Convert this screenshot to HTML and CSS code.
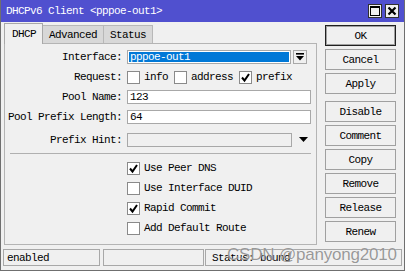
FILE: index.html
```html
<!DOCTYPE html>
<html>
<head>
<meta charset="utf-8">
<link rel="stylesheet" href="styles.css">
</head>
<body>
<div class="window">
  <div class="titlebar">
    <span class="title">DHCPv6 Client &lt;pppoe-out1&gt;</span>
    <div class="tbtns">
      <span class="tbtn"><svg width="12" height="12" viewBox="0 0 12 12"><rect x="1.5" y="1.5" width="9" height="9" fill="none" stroke="#000" stroke-width="1"/><line x1="1" y1="2" x2="11" y2="2" stroke="#000" stroke-width="2"/></svg></span>
      <span class="tbtn"><svg width="12" height="12" viewBox="0 0 12 12"><path d="M2.5 2.5 L9.5 9.5 M9.5 2.5 L2.5 9.5" stroke="#000" stroke-width="2.2" fill="none"/></svg></span>
    </div>
  </div>
  <div class="body">
    <div class="left">
      <div class="tabs">
        <div class="tab active">DHCP</div>
        <div class="tab">Advanced</div>
        <div class="tab">Status</div>
      </div>
      <div class="panel">
        <div class="row">
          <div class="label">Interface:</div>
          <div class="field sel"><span class="hl">pppoe-out1</span></div>
          <div class="ddbtn"><svg width="10" height="10" viewBox="0 0 10 10"><rect x="1" y="1" width="8" height="1.6" fill="#000"/><path d="M1 4 L9 4 L5 8.5 Z" fill="#000"/></svg></div>
        </div>
        <div class="row">
          <div class="label">Request:</div>
          <span class="cb"></span><span class="cbt">info</span>
          <span class="cb"></span><span class="cbt">address</span>
          <span class="cb"><svg width="11" height="11" viewBox="0 0 11 11"><path d="M2 5.5 L4.5 8.5 L9 2" stroke="#000" stroke-width="2" fill="none"/></svg></span><span class="cbt">prefix</span>
        </div>
        <div class="row">
          <div class="label">Pool Name:</div>
          <div class="field full">123</div>
        </div>
        <div class="row">
          <div class="label">Pool Prefix Length:</div>
          <div class="field full">64</div>
        </div>
        <div class="row hint">
          <div class="label">Prefix Hint:</div>
          <div class="field dis"></div>
          <svg class="tri" width="9" height="6" viewBox="0 0 9 6"><path d="M0 0 L9 0 L4.5 5 Z" fill="#000"/></svg>
        </div>
        <div class="sep"></div>
        <div class="checks">
          <div class="crow"><span class="cb"><svg width="11" height="11" viewBox="0 0 11 11"><path d="M2 5.5 L4.5 8.5 L9 2" stroke="#000" stroke-width="2" fill="none"/></svg></span><span class="cbt">Use Peer DNS</span></div>
          <div class="crow"><span class="cb"></span><span class="cbt">Use Interface DUID</span></div>
          <div class="crow"><span class="cb"><svg width="11" height="11" viewBox="0 0 11 11"><path d="M2 5.5 L4.5 8.5 L9 2" stroke="#000" stroke-width="2" fill="none"/></svg></span><span class="cbt">Rapid Commit</span></div>
          <div class="crow"><span class="cb"></span><span class="cbt">Add Default Route</span></div>
        </div>
      </div>
    </div>
    <div class="buttons">
      <div class="btn ok">OK</div>
      <div class="btn">Cancel</div>
      <div class="btn">Apply</div>
      <div class="btn gap">Disable</div>
      <div class="btn">Comment</div>
      <div class="btn">Copy</div>
      <div class="btn">Remove</div>
      <div class="btn">Release</div>
      <div class="btn">Renew</div>
    </div>
  </div>
  <div class="statusbar">
    <div class="cell c1">enabled</div>
    <div class="cell c2"></div>
    <div class="cell c3">Status: bound</div>
  </div>
  <div class="watermark">CSDN @panyong2010</div>
</div>
</body>
</html>
```

FILE: styles.css
```css
* { box-sizing: border-box; }
html, body { margin: 0; padding: 0; background: #f0f0f0; }
body {
  font-family: "Liberation Mono", "Courier New", monospace;
  font-size: 11px;
  letter-spacing: -0.6px;
  color: #000;
}
.window {
  position: relative;
  width: 405px;
  height: 271px;
  background: #f0f0f0;
  border: 1px solid #6f6f6f;
  border-top: none;
  display: flex;
  flex-direction: column;
  overflow: hidden;
}
.titlebar {
  height: 22px;
  margin: 0 -1px;
  background: #5050cf;
  display: flex;
  align-items: center;
  justify-content: space-between;
  padding-left: 6px;
  padding-right: 6px;
  flex: none;
}
.title { color: #fff; font-size: 11px; }
.tbtns { display: flex; gap: 3px; }
.tbtn {
  width: 14px;
  height: 14px;
  background: #f0f0f0;
  border: 1px solid #303030;
  display: flex;
  align-items: center;
  justify-content: center;
}
.body {
  height: 224px;
  display: flex;
  flex: none;
}
.left {
  margin-left: 3px;
  width: 313px;
  display: flex;
  flex-direction: column;
}
.tabs {
  height: 21px;
  display: flex;
  align-items: flex-end;
}
.tab {
  height: 18px;
  padding: 0 6px;
  background: #d8d8d8;
  border: 1px solid #b8b8b8;
  border-bottom: none;
  display: flex;
  align-items: center;
  margin-left: -1px;
}
.tab:first-child { margin-left: 0; }
.tab.active {
  background: #f0f0f0;
  border-color: #a8a8a8;
  padding: 0 6px 0 7px;
  position: relative;
  z-index: 1;
  margin-bottom: -1px;
  height: 21px;
}
.panel {
  height: 202px;
  border: 1px solid #b4b4b4;
  padding-top: 3px;
  display: flex;
  flex-direction: column;
}
.row {
  height: 20px;
  display: flex;
  align-items: center;
}
.row.hint { margin-top: 3px; }
.label {
  width: 117px;
  text-align: right;
  margin-right: 5px;
  white-space: nowrap;
}
.field {
  height: 14px;
  background: #fff;
  border: 1px solid #a8a8a8;
  padding-left: 2px;
  display: flex;
  align-items: center;
}
.field.full { width: 184px; }
.field.sel { width: 164px; padding: 1px; }
.hl {
  background: #0078d7;
  color: #fff;
  height: 100%;
  width: 100%;
  padding-left: 1px;
  display: flex;
  align-items: center;
}
.field.dis { width: 165px; background: #f0f0f0; }
.ddbtn {
  width: 14px;
  height: 14px;
  margin-left: 2px;
  border: 1px solid #a8a8a8;
  background: #f0f0f0;
  display: flex;
  align-items: center;
  justify-content: center;
}
.tri { margin-left: 7px; }
.cb {
  width: 13px;
  height: 13px;
  background: #fff;
  border: 1px solid #8a8a8a;
  display: inline-flex;
  align-items: center;
  justify-content: center;
  flex: none;
}
.cbt { margin-left: 4px; margin-right: 6px; }
.sep {
  margin: 3px 0 0 5px;
  width: 301px;
  height: 1px;
  background: #b0b0b0;
  flex: none;
}
.checks {
  margin-top: 4px;
  padding-left: 122px;
  display: flex;
  flex-direction: column;
}
.crow {
  height: 20px;
  display: flex;
  align-items: center;
}
.buttons {
  margin-left: 8px;
  width: 71px;
  padding-top: 3px;
  display: flex;
  flex-direction: column;
  gap: 3px;
}
.btn {
  height: 21px;
  border: 1px solid #a0a0a0;
  background: #f0f0f0;
  display: flex;
  align-items: center;
  justify-content: center;
}
.btn.ok {
  border: 1px solid #202020;
  box-shadow: inset 0 0 0 1px #a0a0a0;
}
.btn.gap { margin-top: 4px; }
.statusbar {
  flex: 1;
  display: flex;
  padding: 3px 0 0 2px;
}
.cell {
  height: 17px;
  border: 1px solid #a8a8a8;
  display: flex;
  align-items: center;
  padding-left: 3px;
}
.c1 { width: 97px; }
.c2 { width: 101px; margin-left: 3px; }
.c3 { width: 197px; margin-left: 1px; padding-left: 6px; }
.watermark {
  position: absolute;
  left: 226px;
  top: 245px;
  white-space: nowrap;
  font-family: "Liberation Sans", Arial, sans-serif;
  font-size: 17px;
  letter-spacing: -0.2px;
  color: rgba(120,120,120,0.75);
  text-shadow: 0 0 1px rgba(255,255,255,0.8);
}
```
